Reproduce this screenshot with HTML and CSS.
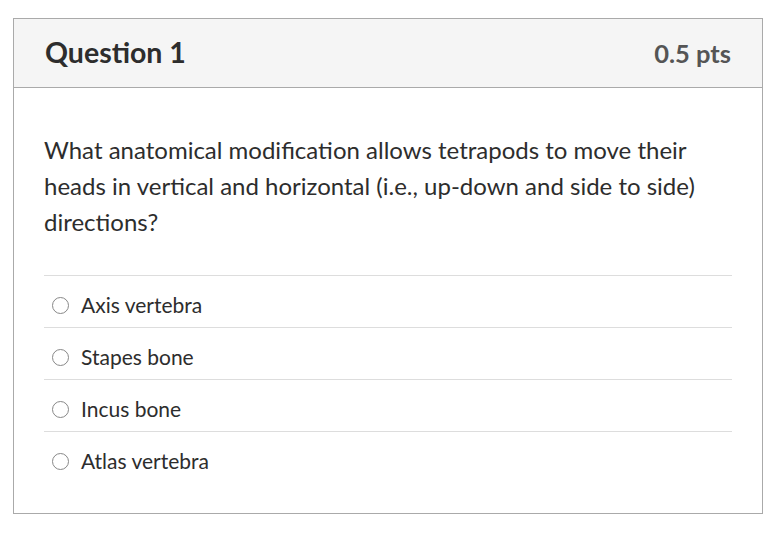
FILE: index.html
```html
<!DOCTYPE html>
<html>
<head>
<meta charset="utf-8">
<link rel="stylesheet" href="styles.css">
</head>
<body>
<div class="card">
  <div class="header">
    <h2 class="title">Question 1</h2>
    <div class="pts">0.5 pts</div>
  </div>
  <div class="body">
    <p class="question">What anatomical modification allows tetrapods to move their heads in vertical and horizontal (i.e., up-down and side to side) directions?</p>
    <ul class="answers">
      <li class="answer"><span class="radio"></span><span class="label">Axis vertebra</span></li>
      <li class="answer"><span class="radio"></span><span class="label">Stapes bone</span></li>
      <li class="answer"><span class="radio"></span><span class="label">Incus bone</span></li>
      <li class="answer"><span class="radio"></span><span class="label">Atlas vertebra</span></li>
    </ul>
  </div>
</div>
</body>
</html>
```
FILE: styles.css
```css
html, body {
  margin: 0;
  padding: 0;
  background: #fff;
}
body {
  font-family: Lato, "Liberation Sans", sans-serif;
  color: #2d2d2d;
  padding: 18px 0 0 13px;
}
.card {
  width: 748px;
  border: 1px solid #aaaaaa;
  background: #fff;
}
.header {
  display: flex;
  align-items: center;
  justify-content: space-between;
  height: 68px;
  padding: 0 31px 0 31px;
  background: #f5f5f5;
  border-bottom: 1px solid #aaaaaa;
}
.title {
  margin: 0;
  font-size: 28.5px;
  font-weight: 700;
  color: #2d2d2d;
  line-height: 34px;
  position: relative;
  top: -1px;
}
.pts {
  font-size: 25.5px;
  font-weight: 700;
  color: #555555;
  line-height: 34px;
}
.body {
  padding: 44px 30px 30px 30px;
}
.question {
  margin: 0;
  font-size: 24px;
  line-height: 36px;
}
.answers {
  list-style: none;
  margin: 35px 0 0 0;
  padding: 0;
}
.answer {
  display: flex;
  align-items: center;
  border-top: 1px solid #dddddd;
  padding: 17px 0 10px 0;
  height: 24px;
}
.radio {
  width: 15px;
  height: 15px;
  border: 1.5px solid #888888;
  border-radius: 50%;
  margin: 0 12px 0 8px;
  flex: none;
}
.label {
  font-size: 21px;
  line-height: 24px;
}
```
